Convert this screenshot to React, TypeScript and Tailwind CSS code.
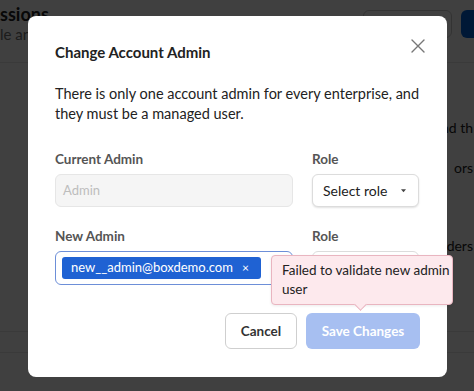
import React from "react";

export default function App() {
  return (
    <div className="relative w-[474px] h-[391px] overflow-hidden bg-white" style={{ fontFamily: "Lato, 'Open Sans', sans-serif" }}>
      {/* background page */}
      <div className="flex flex-col h-full">
        <div className="flex items-start justify-between h-[63px] border-b border-[#e8e8e8] pt-[3px]">
          <div className="flex flex-col">
            <div className="text-[18px] font-bold leading-[22px] text-[#222]">ssions</div>
            <div className="text-[15px] leading-[20px] text-[#6f6f6f] mt-[-1px]">le an</div>
          </div>
          <div className="flex gap-[9px] pt-[7px]">
            <div className="w-[89px] h-[28px] rounded-[6px] border border-[#ccc] bg-white" />
            <div className="w-[40px] h-[28px] rounded-[6px] bg-[#0061d5] mr-[-27px]" />
          </div>
        </div>
        <div className="flex flex-col items-end text-[14px] text-[#222] pr-[1px]">
          <div className="mt-[55px] leading-[20px]">nd th</div>
          <div className="mt-[20px] leading-[20px]">ors</div>
          <div className="mt-[58px] leading-[20px]">ders</div>
        </div>
        <div className="mt-auto mb-[38px] border-t border-[#e8e8e8] h-[22px] border-b" />
      </div>

      {/* overlay */}
      <div className="absolute inset-0 bg-black/75" />

      {/* modal */}
      <div className="absolute left-[28px] top-[16px] w-[419px] h-[361px] bg-white rounded-[8px] px-[27px] pt-[24px]">
        <div className="flex items-start justify-between">
          <h2 className="text-[15px] font-bold leading-[24px] text-[#222]">Change Account Admin</h2>
          <button className="mt-[-1px] mr-[-5px] text-[#777]">
            <svg width="14" height="14" viewBox="0 0 14 14" fill="none" stroke="currentColor" strokeWidth="1.4" strokeLinecap="round">
              <path d="M1 1L13 13M13 1L1 13" />
            </svg>
          </button>
        </div>
        <p className="mt-[20px] text-[14.5px] leading-[20px] text-[#222]">
          There is only one account admin for every enterprise, and they must be a managed user.
        </p>

        <div className="mt-[25px] flex gap-[19px]">
          <div className="flex flex-col w-[238px]">
            <label className="text-[13.5px] font-bold leading-[20px] text-[#555]">Current Admin</label>
            <div className="mt-[5px] h-[33px] rounded-[6px] border border-[#e6e6e6] bg-[#f5f5f5] flex items-center pl-[7px] text-[13px] text-[#bdbdbd]">
              Admin
            </div>
          </div>
          <div className="flex flex-col w-[107px]">
            <label className="text-[13.5px] font-bold leading-[20px] text-[#555]">Role</label>
            <div className="mt-[5px] h-[33px] rounded-[6px] border border-[#dcdcdc] bg-white shadow-[0_1px_2px_rgba(0,0,0,0.12)] flex items-center justify-between pl-[10px] pr-[12px] text-[14px] text-[#222]">
              <span>Select role</span>
              <svg width="5" height="4" viewBox="0 0 6 4"><path d="M0 0H6L3 3.5Z" fill="#444" /></svg>
            </div>
          </div>
        </div>

        <div className="relative mt-[19px] flex gap-[19px]">
          <div className="flex flex-col w-[238px]">
            <label className="text-[13.5px] font-bold leading-[20px] text-[#555]">New Admin</label>
            <div className="mt-[5px] h-[34px] rounded-[6px] border border-[#6d8fd8] bg-white flex items-center pl-[6px]">
              <span className="h-[22px] rounded-[3px] bg-[#1f62d3] text-white text-[13px] flex items-center pl-[9px] pr-[12px] gap-[9px]">
                <span>new__admin@boxdemo.com</span>
                <span className="text-[12px]">×</span>
              </span>
            </div>
          </div>
          <div className="flex flex-col w-[107px]">
            <label className="text-[13.5px] font-bold leading-[20px] text-[#555]">Role</label>
            <div className="mt-[5px] h-[34px] rounded-[6px] border border-[#dcdcdc] bg-white" />
          </div>

          {/* tooltip */}
          <div className="absolute left-[216px] top-[29px] w-[182px] rounded-[4px] border border-[#e9b5c0] bg-[#fde9ed] px-[10px] py-[5px] text-[13.5px] leading-[19px] text-[#222] shadow-[0_1px_3px_rgba(0,0,0,0.08)]">
            <span className="whitespace-nowrap">Failed to validate new admin</span>
            <br />
            user
            <div className="absolute left-[84px] bottom-[-5px] w-[9px] h-[9px] rotate-45 bg-[#fde9ed] border-r border-b border-[#e9b5c0]" />
          </div>
        </div>

        <div className="mt-[28px] flex justify-end gap-[9px]">
          <button className="w-[72px] h-[36px] rounded-[6px] border border-[#cfcfcf] bg-white text-[13.5px] font-bold text-[#333]">Cancel</button>
          <button className="w-[114px] h-[36px] rounded-[6px] bg-[#a7bff1] text-[13.5px] font-bold text-white">Save Changes</button>
        </div>
      </div>
    </div>
  );
}
